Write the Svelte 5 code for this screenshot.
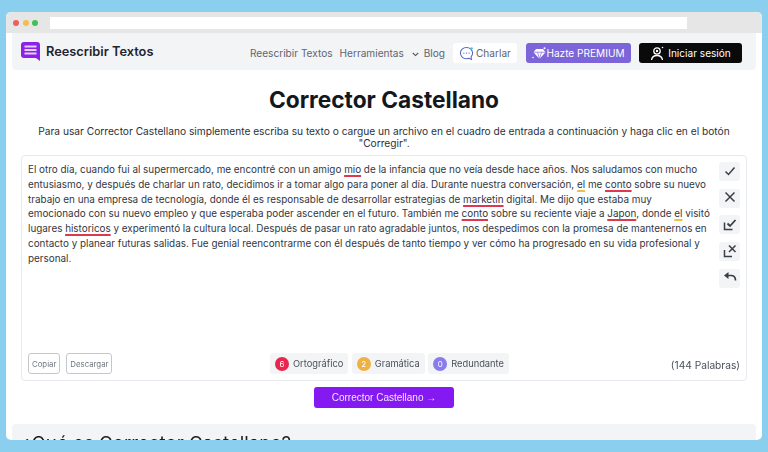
<script>
  const tools = ['check', 'x', 'cc', 'cx', 'undo'];
</script>

<div class="window">
  <div class="titlebar">
    <span class="dot red"></span><span class="dot yellow"></span><span class="dot green"></span>
    <div class="url"></div>
  </div>
  <div class="content">
    <nav class="nav">
      <div class="brand">
        <svg width="19" height="20" viewBox="0 0 19 20">
          <path d="M3 0h13a3 3 0 0 1 3 3v16l-4-3H3a3 3 0 0 1-3-3V3a3 3 0 0 1 3-3z" fill="#8a22e8"/>
          <path d="M3.5 4.5h12M3.5 8h12M3.5 11.5h12" stroke="#e4d0fa" stroke-width="1.8"/>
        </svg>
        <span>Reescribir Textos</span>
      </div>
      <div class="links">
        <span class="link">Reescribir Textos</span>
        <span class="link herr">Herramientas
          <svg class="chev" width="7" height="5" viewBox="0 0 7 5"><path d="M.8 1l2.700 2.600L6.200 1" fill="none" stroke="#555" stroke-width="1.100"/></svg>
        </span>
        <span class="link blog">Blog</span>
        <span class="chat">
          <svg width="15" height="15" viewBox="0 0 16 16"><path d="M8 1.500c-3.700 0-6.500 2.600-6.500 6 0 3.300 2.800 6 6.500 6 .9 0 1.700-.1 2.500-.4l2.700 1.300-.3-2.900c1-1 1.600-2.400 1.600-4 0-3.400-2.800-6-6.500-6z" fill="none" stroke="#5560c8" stroke-width="1.100"/><circle cx="5.200" cy="7.500" r=".7" fill="#5560c8"/><circle cx="8" cy="7.500" r=".7" fill="#5560c8"/><circle cx="10.800" cy="7.500" r=".7" fill="#5560c8"/><circle cx="13.500" cy="2.500" r="1.300" fill="#4fc3d9"/></svg>
          Charlar
        </span>
        <span class="premium">
          <svg width="14" height="13" viewBox="0 0 14 13"><path d="M4 2h7l2.500 3.200L7.500 12 1.500 5.200z" fill="#fff"/><path d="M1.500 5.200h12M5.500 5.200L7.500 12l2-6.800" stroke="#7c66d6" stroke-width=".7" fill="none"/><circle cx="12.500" cy="1.200" r="1" fill="#fff"/><circle cx="1" cy="10.500" r=".8" fill="#fff"/></svg>
          Hazte PREMIUM
        </span>
        <span class="login">
          <svg width="15" height="15" viewBox="0 0 15 15"><circle cx="7" cy="5" r="3.200" fill="none" stroke="#fff" stroke-width="1.300"/><circle cx="7" cy="5" r="1.200" fill="#fff"/><path d="M1.500 14c.5-3 2.800-4.500 5.500-4.500s5 1.500 5.500 4.500" fill="none" stroke="#fff" stroke-width="1.300"/><circle cx="12.500" cy="1.500" r=".8" fill="#fff"/></svg>
          Iniciar sesión
        </span>
      </div>
    </nav>

    <h1>Corrector Castellano</h1>
    <p class="intro">Para usar Corrector Castellano simplemente escriba su texto o cargue un archivo en el cuadro de entrada a continuación y haga clic en el botón "Corregir".</p>

    <section class="editor">
      <div class="main">
        <div class="text">El otro día, cuando fui al supermercado, me encontré con un amigo <u class="r">mio</u> de la infancia que no veía desde hace años. Nos saludamos con mucho<br>entusiasmo, y después de charlar un rato, decidimos ir a tomar algo para poner al día. Durante nuestra conversación, <u class="y">el</u> me <u class="r">conto</u> sobre su nuevo<br>trabajo en una empresa de tecnología, donde él es responsable de desarrollar estrategias de <u class="r">marketin</u> digital. Me dijo que estaba muy<br>emocionado con su nuevo empleo y que esperaba poder ascender en el futuro. También me <u class="r">conto</u> sobre su reciente viaje a <u class="r">Japon</u>, donde <u class="y">el</u> visitó<br>lugares <u class="r">historicos</u> y experimentó la cultura local. Después de pasar un rato agradable juntos, nos despedimos con la promesa de mantenernos en<br>contacto y planear futuras salidas. Fue genial reencontrarme con él después de tanto tiempo y ver cómo ha progresado en su vida profesional y<br>personal.</div>
        <div class="tools">
          {#each tools as t}
            <span class="tool">
              <svg width="14" height="14" viewBox="0 0 14 14" fill="none" stroke="#3a3f47" stroke-width="1.500">
                {#if t === 'check'}
                  <path d="M2.500 7.500l3 3 6-7"/>
                {:else if t === 'x'}
                  <path d="M2.500 2.500l9 9M11.500 2.500l-9 9"/>
                {:else if t === 'cc'}
                  <path d="M1.500 5.500v7h8"/>
                  <path d="M4.500 6.500l2.500 2.500 5.500-6" stroke-width="1.800"/>
                {:else if t === 'cx'}
                  <path d="M1.500 6v6.500h7.500"/>
                  <path d="M6 1.500l6.500 6.500M12.500 1.500L6 8"/>
                {:else}
                  <path d="M4 5.500h4c2.500 0 4.500 1.800 4.500 5" stroke-width="1.700"/>
                  <path d="M1 5.500L5.500 2v7z" fill="#3a3f47" stroke="none"/>
                {/if}
              </svg>
            </span>
          {/each}
        </div>
      </div>
      <div class="bottom">
        <div class="actions">
          <span class="small">Copiar</span>
          <span class="small">Descargar</span>
        </div>
        <div class="stats">
          <span class="stat"><b class="badge red-b">6</b>Ortográfico</span>
          <span class="stat"><b class="badge yel-b">2</b>Gramática</span>
          <span class="stat"><b class="badge pur-b">0</b>Redundante</span>
        </div>
        <span class="count">(144 Palabras)</span>
      </div>
    </section>

    <div class="cta-row"><span class="cta">Corrector Castellano →</span></div>

    <section class="about">
      <h2>¿Qué es Corrector Castellano?</h2>
    </section>
  </div>
</div>

<style>
  :global(body) {
    margin: 0;
    background: #8bcfee;
  }
  .window {
    box-sizing: border-box;
    width: 756px;
    height: 428px;
    margin: 12px 6px;
    background: #fff;
    border-radius: 5px;
    overflow: hidden;
    font-family: Inter, "Liberation Sans", sans-serif;
    filter: blur(0.35px);
  }
  .titlebar {
    height: 21px;
    background: #e6e6e6;
    display: flex;
    align-items: center;
    padding-left: 7px;
    gap: 3.500px;
  }
  .dot { width: 6px; height: 6px; border-radius: 50%; }
  .red { background: #ee5f5b; }
  .yellow { background: #f5bd4f; }
  .green { background: #3fc25a; }
  .url {
    width: 637px;
    height: 12px;
    margin-left: 8px;
    background: #fff;
  }
  .content { padding: 0 6px; }
  .nav {
    height: 37px;
    background: #f3f4f6;
    border-radius: 0 0 4px 4px;
    display: flex;
    align-items: center;
    justify-content: space-between;
    padding: 0 14px 0 9px;
  }
  .brand {
    display: flex;
    align-items: center;
    gap: 6px;
    font-weight: 600;
    font-size: 12.800px;
    color: #1f2430;
  }
  .links {
    display: flex;
    align-items: center;
    font-size: 10.100px;
    color: #5f6570;
    margin-top: 3px;
  }
  .link { margin-right: 7px; white-space: nowrap; }
  .herr { margin-right: 5px; }
  .chev { margin-left: 5px; }
  .blog { margin-right: 8px; }
  .chat {
    background: #fff;
    box-sizing: border-box;
    width: 64px;
    height: 20px;
    display: flex;
    align-items: center;
    gap: 2px;
    padding: 0 6px;
    border-radius: 3px;
    margin-right: 9px;
  }
  .premium {
    background: #7b65d8;
    color: #fff;
    height: 20px;
    width: 105px;
    box-sizing: border-box;
    display: flex;
    align-items: center;
    justify-content: center;
    border-radius: 3px;
    margin-right: 8px;
  }
  .login {
    background: #0a0a0a;
    color: #fff;
    height: 20px;
    width: 103px;
    display: flex;
    align-items: center;
    justify-content: center;
    gap: 3px;
    border-radius: 3px;
  }
  h1 {
    margin: 16px 0 0;
    text-align: center;
    font-size: 22.700px;
    line-height: 27px;
    font-weight: 700;
    color: #14171c;
  }
  .intro {
    margin: 12px auto 0;
    width: 700px;
    text-align: center;
    font-size: 10.180px;
    line-height: 12px;
    color: #2c3038;
  }
  .editor {
    box-sizing: border-box;
    margin: 6px 9px 0;
    height: 226px;
    border: 1px solid #e7e9ee;
    border-radius: 4px;
    display: flex;
    flex-direction: column;
    justify-content: space-between;
  }
  .main { display: flex; justify-content: space-between; padding: 6px 6px 0 6px; }
  .text {
    width: 686px;
    font-size: 9.900px;
    line-height: 14.830px;
    color: #33373f;
    white-space: nowrap;
  }
  u {
    text-decoration-line: underline;
    text-decoration-thickness: 1.500px;
    text-underline-offset: 1.500px;
  }
  u.r { text-decoration-color: #e0364f; }
  u.y { text-decoration-color: #efc04a; }
  .tools { display: flex; flex-direction: column; gap: 7.700px; }
  .tool {
    width: 21px;
    height: 19px;
    background: #f3f4f6;
    border-radius: 3px;
    display: flex;
    align-items: center;
    justify-content: center;
  }
  .tool svg { margin-bottom: 2px; }
  .bottom {
    display: flex;
    align-items: center;
    padding: 0 6px 6px 6px;
  }
  .actions { display: flex; gap: 6px; width: 242px; }
  .small {
    height: 19px;
    padding: 0 3px;
    display: flex;
    align-items: center;
    border: 1px solid #c4c7cc;
    border-radius: 3px;
    font-size: 7.800px;
    color: #70757d;
  }
  .stats { display: flex; gap: 3.500px; }
  .stat {
    height: 21px;
    display: flex;
    align-items: center;
    gap: 4px;
    padding: 0 5px;
    background: #f3f4f6;
    border-radius: 3px;
    font-size: 9.300px;
    color: #4a4f58;
  }
  .badge {
    width: 14px;
    height: 14px;
    border-radius: 50%;
    display: flex;
    align-items: center;
    justify-content: center;
    font-size: 8px;
    font-weight: 400;
    color: #fff;
  }
  .red-b { background: #e8264f; }
  .yel-b { background: #eeb244; }
  .pur-b { background: #8a7bee; }
  .count { margin-left: auto; margin-top: 2px; font-size: 10.200px; color: #4a4f58; }
  .cta-row { display: flex; justify-content: center; margin-top: 6px; }
  .cta {
    width: 140px;
    height: 21px;
    background: #8419f2;
    color: #f0e4ff;
    border-radius: 3px;
    display: flex;
    align-items: center;
    justify-content: center;
    font-size: 10px;
    font-family: "Liberation Sans", Arial, sans-serif;
  }
  .about {
    margin-top: 16px;
    height: 60px;
    background: #f3f4f6;
    border-radius: 4px;
    padding: 9px 10px 0;
  }
  h2 {
    margin: 0;
    font-size: 18.700px;
    font-weight: 400;
    line-height: 22px;
    color: #1a1d22;
  }
</style>
